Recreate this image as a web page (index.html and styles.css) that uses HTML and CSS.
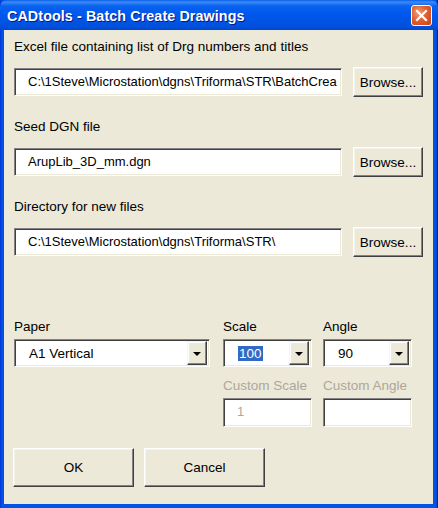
FILE: index.html
```html
<!DOCTYPE html>
<html>
<head>
<meta charset="utf-8">
<link rel="stylesheet" href="styles.css">
</head>
<body>
<div class="window">
  <div class="titlebar">
    <span class="title">CADtools - Batch Create Drawings</span>
    <span class="close"><svg width="13" height="13" viewBox="0 0 13 13"><path d="M2 2 L11 11 M11 2 L2 11" stroke="#fff" stroke-width="2.2" stroke-linecap="square"/></svg></span>
  </div>
  <div class="client">
    <div class="label first">Excel file containing list of Drg numbers and titles</div>
    <div class="row">
      <div class="field">C:\1Steve\Microstation\dgns\Triforma\STR\BatchCrea</div>
      <div class="btn browse">Browse...</div>
    </div>
    <div class="label">Seed DGN file</div>
    <div class="row">
      <div class="field">ArupLib_3D_mm.dgn</div>
      <div class="btn browse">Browse...</div>
    </div>
    <div class="label">Directory for new files</div>
    <div class="row">
      <div class="field">C:\1Steve\Microstation\dgns\Triforma\STR\</div>
      <div class="btn browse">Browse...</div>
    </div>

    <div class="grid">
      <div class="label cell">Paper</div>
      <div class="label cell">Scale</div>
      <div class="label cell">Angle</div>
      <div class="combo paper"><span class="ctext">A1 Vertical</span><span class="drop"><i class="tri"></i></span></div>
      <div class="combo small"><span class="ctext"><span class="sel">100</span></span><span class="drop"><i class="tri"></i></span></div>
      <div class="combo small"><span class="ctext">90</span><span class="drop"><i class="tri"></i></span></div>
      <div></div>
      <div class="label cell disabled cust">Custom Scale</div>
      <div class="label cell disabled cust">Custom Angle</div>
      <div></div>
      <div class="field small dis">1</div>
      <div class="field small dis"></div>
    </div>

    <div class="actions">
      <div class="btn big">OK</div>
      <div class="btn big">Cancel</div>
    </div>
  </div>
</div>
</body>
</html>
```

FILE: styles.css
```css
html, body {
  margin: 0;
  padding: 0;
  background: #0054e3;
}
.window {
  width: 438px;
  height: 508px;
  box-sizing: border-box;
  display: flex;
  flex-direction: column;
  background: linear-gradient(to right, #0831d9 0, #0054e3 2px, #0054e3 436px, #001ea0 438px);
  font-family: "Liberation Sans", Arial, sans-serif;
  font-size: 13.5px;
  color: #000;
}
.titlebar {
  height: 30px;
  flex: none;
  display: flex;
  align-items: center;
  justify-content: space-between;
  padding: 0 6px 0 7px;
  box-sizing: border-box;
  background: linear-gradient(to bottom, #0a5fea 0, #3d8bf7 2px, #0862ef 6px, #0058ee 14px, #0054e3 22px, #0050dc 27px, #0046cc 30px);
  border-radius: 7px 7px 0 0;
}
.title {
  color: #fff;
  font-weight: bold;
  font-size: 14.3px;
  letter-spacing: 0.1px;
  text-shadow: 1px 1px 0 #0a1883;
  padding-top: 1px;
}
.close {
  width: 19px;
  height: 19px;
  border: 1px solid #fff;
  border-radius: 3px;
  background: radial-gradient(circle at 35% 35%, #f0a080 0, #e0602f 45%, #c8401a 100%);
  display: flex;
  align-items: center;
  justify-content: center;
}
.client {
  flex: 1;
  margin: 0 5px 4px 4px;
  background: #ece9d8;
  padding: 9px 0 0 10px;
  box-sizing: border-box;
}
.label {
  line-height: 16px;
  height: 16px;
  white-space: nowrap;
  margin-top: 22px;
}
.label.first { margin-top: 0; }
.row {
  display: flex;
  align-items: center;
  height: 30px;
  margin-top: 12px;
}
.field {
  width: 328px;
  height: 28px;
  box-sizing: border-box;
  background: #fff;
  border: 1px solid;
  border-color: #848284 #fff #fff #848284;
  box-shadow: inset 1px 1px 0 #404040, inset -1px -1px 0 #ece9d8;
  padding-left: 13px;
  font-size: 13px;
  line-height: 25px;
  white-space: nowrap;
  overflow: hidden;
}
.btn {
  box-sizing: border-box;
  background: #ece9d8;
  border: 1px solid;
  border-color: #fff #404040 #404040 #fff;
  box-shadow: inset -1px -1px 0 #848284, inset 1px 1px 0 #f4f3ee;
  display: flex;
  align-items: center;
  justify-content: center;
}
.browse {
  width: 70px;
  height: 30px;
  margin-left: 11px;
}
.grid {
  display: grid;
  grid-template-columns: 209px 100px 89px;
  margin-top: 62px;
}
.cell { margin-top: 0; }
.combo {
  margin-top: 4px;
  height: 28px;
  box-sizing: border-box;
  background: #fff;
  border: 1px solid;
  border-color: #848284 #fff #fff #848284;
  box-shadow: inset 1px 1px 0 #404040, inset -1px -1px 0 #ece9d8;
  display: flex;
  align-items: center;
  padding: 2px;
}
.combo.paper { width: 196px; }
.combo.small { width: 89px; }
.ctext {
  flex: 1;
  padding-left: 12px;
  white-space: nowrap;
}
.sel {
  background: #316ac5;
  color: #fff;
  padding: 0 1px;
}
.drop {
  width: 20px;
  height: 24px;
  box-sizing: border-box;
  background: #ece9d8;
  border: 1px solid;
  border-color: #f4f3ee #404040 #404040 #f4f3ee;
  box-shadow: inset -1px -1px 0 #848284, inset 1px 1px 0 #fff;
  display: flex;
  align-items: center;
  justify-content: center;
}
.tri {
  width: 0;
  height: 0;
  border-left: 4px solid transparent;
  border-right: 4px solid transparent;
  border-top: 4px solid #000;
  margin-top: 1px;
}
.cust { margin-top: 11px; }
.disabled { color: #aca899; }
.field.small {
  width: 89px;
  height: 29px;
  margin-top: 4px;
  padding-left: 13px;
  line-height: 26px;
}
.field.dis { color: #aca899; }
.actions {
  display: flex;
  gap: 10px;
  margin-top: 21px;
  margin-left: -1px;
}
.big {
  width: 121px;
  height: 39px;
}
```
